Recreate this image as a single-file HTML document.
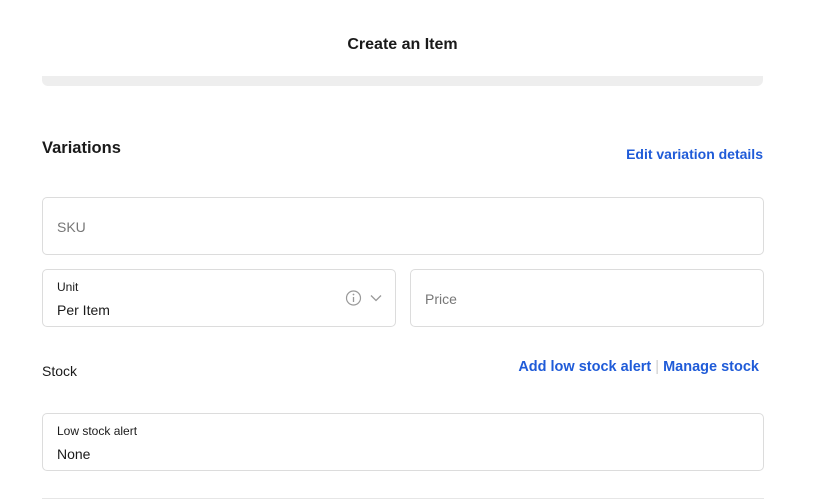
<!DOCTYPE html>
<html><head><style>
body{margin:0;width:830px;height:501px;background:#fff;font-family:"Liberation Sans",sans-serif;position:relative;overflow:hidden;color:#1a1a1a}
.a{position:absolute;white-space:nowrap}
.box{position:absolute;border:1px solid #dcdcdc;border-radius:5px;box-sizing:border-box;background:#fff}
.lnk{color:#1f5bd8;font-weight:bold;font-size:14px}
</style></head><body>
<div class="a" style="left:0;width:805px;top:36px;text-align:center;font-size:16px;font-weight:bold">Create an Item</div>
<div class="a" style="left:42px;top:76px;width:721px;height:10px;background:#eeeeee;border-radius:0 0 6px 6px"></div>
<div class="a" style="left:42px;top:139px;font-size:16.5px;font-weight:bold">Variations</div>
<div class="a lnk" style="right:67px;top:146px">Edit variation details</div>
<div class="box" style="left:42px;top:197px;width:722px;height:58px"></div>
<div class="a" style="left:57px;top:219px;font-size:14px;color:#777">SKU</div>
<div class="box" style="left:42px;top:269px;width:354px;height:58px"></div>
<div class="a" style="left:57px;top:280px;font-size:12px;font-weight:500">Unit</div>
<div class="a" style="left:57px;top:302px;font-size:14px">Per Item</div>
<svg class="a" style="left:345px;top:290px" width="40" height="16" viewBox="0 0 40 16"><circle cx="8.5" cy="8" r="7" fill="none" stroke="#999" stroke-width="1.2"/><line x1="8.5" y1="7" x2="8.5" y2="12" stroke="#999" stroke-width="1.3"/><circle cx="8.5" cy="4.5" r="0.9" fill="#999"/><path d="M26 5.5l5 5 5-5" fill="none" stroke="#999" stroke-width="1.3"/></svg>
<div class="box" style="left:410px;top:269px;width:354px;height:58px"></div>
<div class="a" style="left:425px;top:291px;font-size:14px;color:#777">Price</div>
<div class="a" style="left:42px;top:363px;font-size:14px;font-weight:500">Stock</div>
<div class="a lnk" style="right:71px;top:359px;font-size:14.5px">Add low stock alert <span style="color:#ccc;font-weight:normal">|</span> Manage stock</div>
<div class="box" style="left:42px;top:413px;width:722px;height:58px"></div>
<div class="a" style="left:57px;top:424px;font-size:12px;font-weight:500">Low stock alert</div>
<div class="a" style="left:57px;top:446px;font-size:14px">None</div>
<div class="a" style="left:42px;top:498px;width:722px;height:1px;background:#e6e6e6"></div>
</body></html>
